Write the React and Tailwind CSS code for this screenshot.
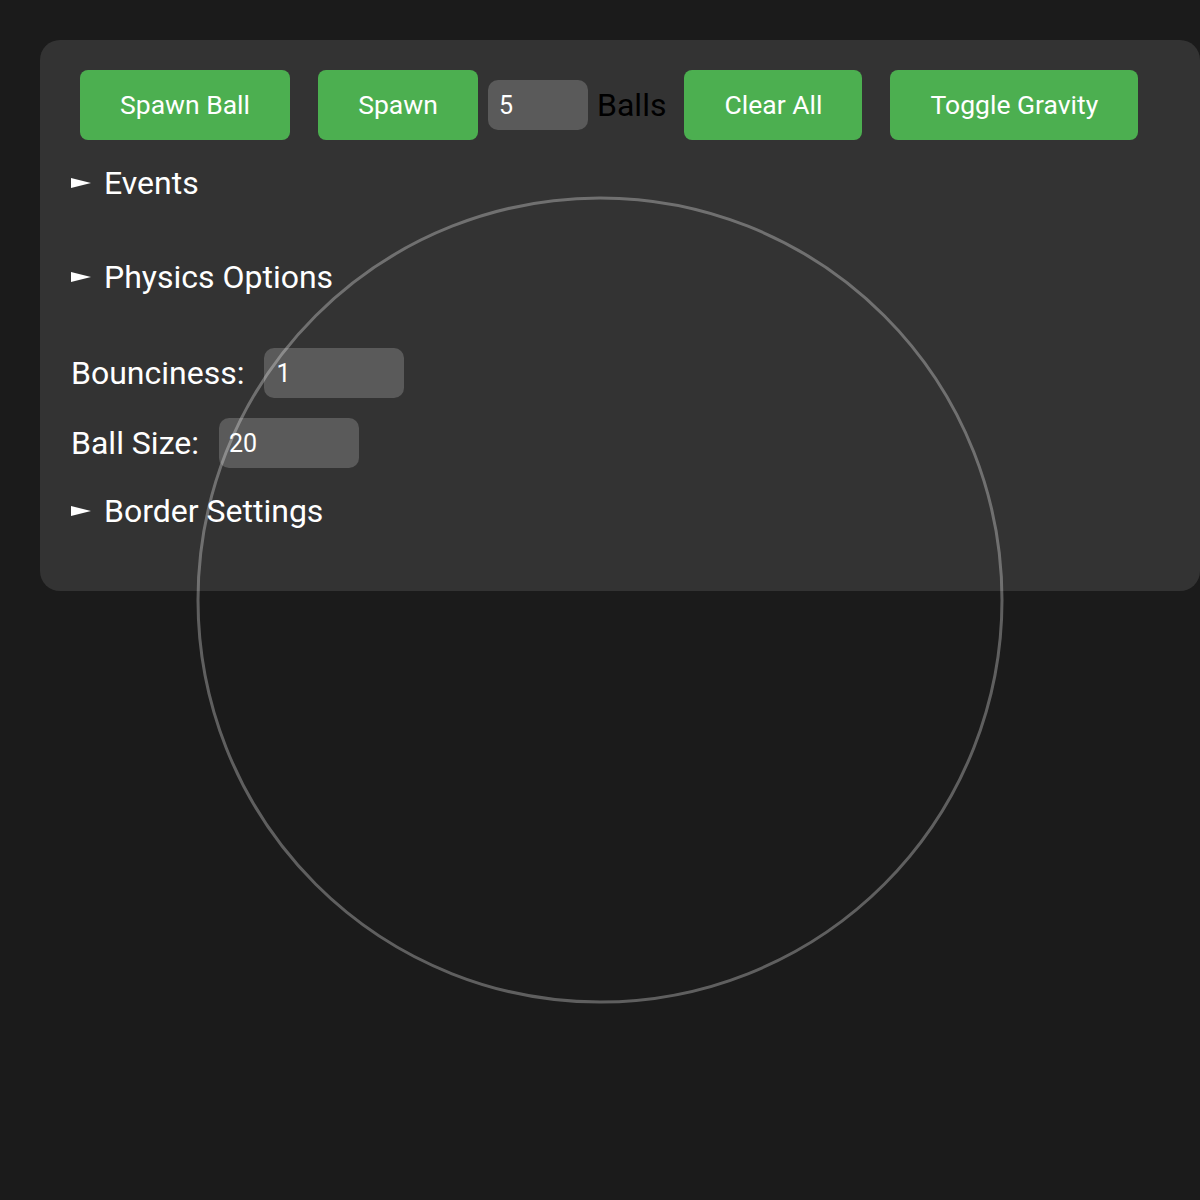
import { useState } from 'react';

const font = { fontFamily: 'Roboto, "Noto Sans", sans-serif' };

const Arrow = () => (
  <svg width="20" height="10" viewBox="0 0 20 10" className="mr-[13px] shrink-0">
    <polygon points="0,0 20,5 0,10" fill="#ffffff" />
  </svg>
);

const Summary = ({ label, className = '' }) => (
  <div className={`flex items-center h-[40px] text-[32px] text-white ${className}`}>
    <Arrow />
    <span>{label}</span>
  </div>
);

const App = () => {
  const [count, setCount] = useState('5');
  const [bounce, setBounce] = useState('1');
  const [size, setSize] = useState('20');

  return (
    <div className="relative w-[1200px] h-[1200px] bg-[#1b1b1b] overflow-hidden pt-[40px] pl-[40px]" style={font}>
      <div className="w-[1160px] h-[551px] bg-[#333333] rounded-[20px] pt-[30px] pl-[31px]">
        {/* controls */}
        <div className="flex items-center h-[70px] pl-[9px]">
          <button className="w-[210px] h-[70px] bg-[#4caf50] text-white text-[26.5px] rounded-[8px] flex items-center justify-center">
            Spawn Ball
          </button>
          <button className="ml-[28px] w-[160px] h-[70px] bg-[#4caf50] text-white text-[26.5px] rounded-[8px] flex items-center justify-center">
            Spawn
          </button>
          <input
            value={count}
            onChange={(e) => setCount(e.target.value)}
            className="ml-[10px] w-[100px] h-[50px] bg-[#5a5a5a] text-white text-[25px] rounded-[10px] px-[11px] outline-none"
          />
          <span className="ml-[9px] text-[32px] text-black leading-none">Balls</span>
          <button className="ml-[18px] w-[178px] h-[70px] bg-[#4caf50] text-white text-[26.5px] rounded-[8px] flex items-center justify-center">
            Clear All
          </button>
          <button className="ml-[28px] w-[248px] h-[70px] bg-[#4caf50] text-white text-[26.5px] rounded-[8px] flex items-center justify-center">
            Toggle Gravity
          </button>
        </div>

        <Summary label="Events" className="mt-[23px]" />
        <Summary label="Physics Options" className="mt-[54px]" />

        <div className="flex items-center h-[50px] mt-[51px] text-[32px] text-white">
          <span className="mr-[20px]">Bounciness:</span>
          <input
            value={bounce}
            onChange={(e) => setBounce(e.target.value)}
            className="w-[140px] h-[50px] bg-[#5a5a5a] text-white text-[25px] rounded-[10px] px-[12px] outline-none"
          />
        </div>
        <div className="flex items-center h-[50px] mt-[20px] text-[32px] text-white">
          <span className="mr-[20px]">Ball Size:</span>
          <input
            value={size}
            onChange={(e) => setSize(e.target.value)}
            className="w-[140px] h-[50px] bg-[#5a5a5a] text-white text-[25px] rounded-[10px] px-[10px] outline-none"
          />
        </div>

        <Summary label="Border Settings" className="mt-[23px]" />
      </div>

      {/* play area border, drawn on top */}
      <svg width="1200" height="1200" className="absolute left-0 top-0 pointer-events-none">
        <circle cx="600" cy="600" r="402" fill="none" stroke="rgba(255,255,255,0.3)" strokeWidth="3" />
      </svg>
    </div>
  );
};

export default App;
